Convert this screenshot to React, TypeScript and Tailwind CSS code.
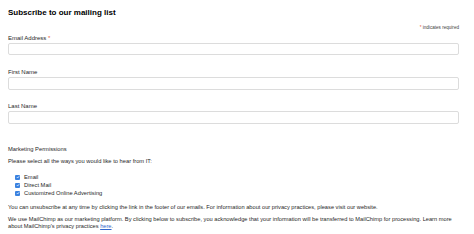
export default function App() {
  const font = { fontFamily: '"Liberation Sans", Arial, sans-serif' };
  const checks = ['Email', 'Direct Mail', 'Customized Online Advertising'];

  return (
    <div className="w-[474px] h-[234px] bg-white overflow-hidden text-[#1f1f1f]" style={font}>
      <div className="pl-[8px] pr-[15px]">
        <h2 className="mt-[8px] text-[8px] leading-[10px] font-bold text-black">Subscribe to our mailing list</h2>
        <div className="mt-[7px] text-right text-[4.6px] leading-[6px] text-[#444]">
          <span className="text-[#e85c41]">*</span> indicates required
        </div>

        <label className="block mt-[3px] text-[6px] leading-[8px]">
          Email Address <span className="text-[#e85c41]">*</span>
        </label>
        <div className="mt-[1px] h-[12px] border border-[#dcdcdc] rounded-[2px] bg-white" />

        <label className="block mt-[13px] text-[6px] leading-[8px]">First Name</label>
        <div className="mt-[1px] h-[13px] border border-[#dcdcdc] rounded-[2px] bg-white" />

        <label className="block mt-[12px] text-[6px] leading-[8px]">Last Name</label>
        <div className="mt-[1px] h-[13px] border border-[#dcdcdc] rounded-[2px] bg-white" />

        <div className="mt-[21px] text-[5.8px] leading-[8px]">Marketing Permissions</div>
        <div className="mt-[4px] text-[5.75px] leading-[8px]">Please select all the ways you would like to hear from IT:</div>

        <div className="mt-[8px] pl-[7px]">
          {checks.map((c) => (
            <div key={c} className="flex items-center h-[8px] text-[5.75px] leading-[8px]">
              <span className="w-[5px] h-[5px] rounded-[1px] bg-[#3a82e0] flex items-center justify-center mr-[4px]">
                <svg width="4" height="4" viewBox="0 0 10 10">
                  <path d="M2 5.2 L4.2 7.4 L8.2 2.8" stroke="white" strokeWidth="1.8" fill="none" />
                </svg>
              </span>
              {c}
            </div>
          ))}
        </div>

        <p className="mt-[6px] text-[5.7px] leading-[8px]">
          You can unsubscribe at any time by clicking the link in the footer of our emails. For information about our privacy practices, please visit our website.
        </p>
        <p className="mt-[5px] text-[5.7px] leading-[7px]">
          We use MailChimp as our marketing platform. By clicking below to subscribe, you acknowledge that your information will be transferred to MailChimp for processing. Learn more about MailChimp's privacy practices{' '}
          <a className="text-[#3366cc] underline">here</a>.
        </p>
      </div>
    </div>
  );
}
